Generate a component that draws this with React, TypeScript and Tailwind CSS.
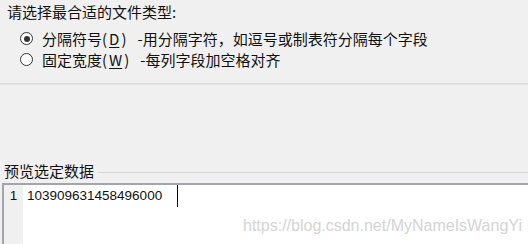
import React from "react";

function Radio({ checked }: { checked?: boolean }) {
  return (
    <span className="relative flex h-[13px] w-[13px] shrink-0 items-center justify-center rounded-full border border-[#333333] bg-white">
      {checked && <span className="h-[6px] w-[6px] rounded-full bg-[#333333]" />}
    </span>
  );
}

export default function App() {
  return (
    <div
      className="relative flex h-[244px] w-[528px] flex-col overflow-hidden bg-[#f0f0f0] text-[15px] text-[#111111]"
      style={{ fontFamily: '"Noto Sans CJK SC", "Noto Sans", sans-serif' }}
    >
      <div className="pl-[7px] pt-[1px] leading-[21px]">请选择最合适的文件类型:</div>
      <div className="mt-[6px] flex flex-col pl-[20px]">
        <div className="flex h-[21px] items-center">
          <Radio checked />
          <span className="ml-[9px] leading-[21px] whitespace-pre">
            分隔符号(<span className="px-[2px] underline underline-offset-2">D</span>)
          </span>
          <span className="ml-[11px] leading-[21px]">-用分隔字符，如逗号或制表符分隔每个字段</span>
        </div>
        <div className="flex h-[21px] items-center">
          <Radio />
          <span className="ml-[9px] leading-[21px] whitespace-pre">
            固定宽度(<span className="px-[2px] underline underline-offset-2">W</span>)
          </span>
          <span className="ml-[11px] leading-[21px]">-每列字段加空格对齐</span>
        </div>
      </div>
      <div className="mt-[13px] h-[2px] w-full border-t border-[#d8d8d8] bg-[#e6e6e6]" />
      <div className="flex-1" />
      <div className="flex h-[21px] items-center">
        <span className="pl-[4px] leading-[21px]">预览选定数据</span>
        <span className="ml-[4px] mt-[3px] h-px flex-1 bg-[#d6d6d6]" />
      </div>
      <div className="ml-[2px] mt-[2px] flex h-[61px] border-l-2 border-t-2 border-[#a2a6ab] bg-white">
        <div className="flex w-[19px] justify-center bg-[#f0f0f0] pt-[1px]">
          <span className="text-[13.5px] leading-[20px]" style={{ fontFamily: '"Liberation Sans", Arial, sans-serif' }}>1</span>
        </div>
        <div className="flex items-start pl-[4px] pt-[1px]">
          <span className="text-[13.5px] leading-[20px]" style={{ fontFamily: '"Liberation Sans", Arial, sans-serif' }}>
            103909631458496000
          </span>
          <span className="ml-[15px] mt-[-1px] h-[22px] w-px bg-black" />
        </div>
      </div>
      <div
        className="absolute left-[243px] top-[218px] text-[16px] leading-none text-[#d4d4d4]"
        style={{ fontFamily: '"Liberation Sans", Arial, sans-serif' }}
      >
        https://blog.csdn.net/MyNameIsWangYi
      </div>
    </div>
  );
}
